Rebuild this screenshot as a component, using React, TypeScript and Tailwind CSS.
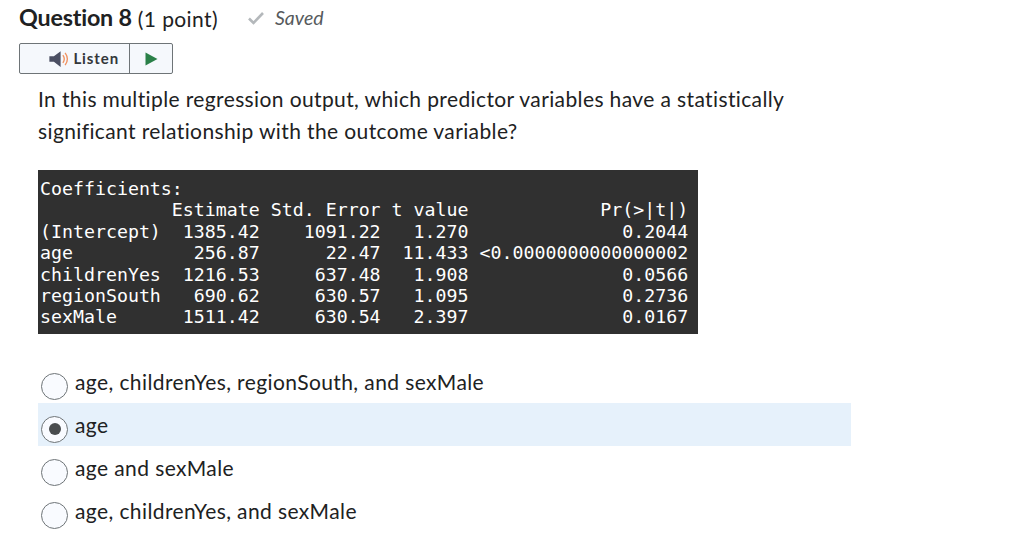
import React from "react";

const rows = [
  ["", "Estimate", "Std. Error", "t value", "Pr(>|t|)"],
  ["(Intercept)", "1385.42", "1091.22", "1.270", "0.2044"],
  ["age", "256.87", "22.47", "11.433", "<0.0000000000000002"],
  ["childrenYes", "1216.53", "637.48", "1.908", "0.0566"],
  ["regionSouth", "690.62", "630.57", "1.095", "0.2736"],
  ["sexMale", "1511.42", "630.54", "2.397", "0.0167"],
];

const line = (r: string[]) =>
  r[0].padEnd(11) + r[1].padStart(9) + r[2].padStart(11) + r[3].padStart(8) + r[4].padStart(20);

const options = [
  "age, childrenYes, regionSouth, and sexMale",
  "age",
  "age and sexMale",
  "age, childrenYes, and sexMale",
];

function Radio({ checked }: { checked: boolean }) {
  return (
    <span className="mt-[9px] flex h-[27px] w-[27px] shrink-0 items-center justify-center rounded-full border border-[#6e7477] bg-[#f9fbff]">
      {checked && <span className="h-[12px] w-[12px] rounded-full bg-[#494c4e]" />}
    </span>
  );
}

export default function App() {
  return (
    <div className="h-[556px] w-[1017px] overflow-hidden bg-white font-['Lato','Noto_Sans',sans-serif] text-[#202122]">
      <div className="flex h-[36px] items-center pl-[19px]">
        <h2 className="text-[23.3px] font-bold leading-none tracking-[-0.2px]">Question 8</h2>
        <span className="ml-[6px] text-[21px] leading-none tracking-[0.4px] text-[#202122]">(1 point)</span>
        <svg width="18" height="16" viewBox="0 0 18 16" className="ml-[29px]">
          <path d="M2 8.5 L6.5 13 L16 3" fill="none" stroke="#b4b8bb" strokeWidth="2.6" />
        </svg>
        <span className="ml-[10px] text-[19.5px] italic leading-none text-[#565a5c]">Saved</span>
      </div>

      <div className="ml-[19px] mt-[7px] flex h-[31px] w-[154px] rounded-[2px] border border-[#6e7477] bg-[#f5f8fc]">
        <div className="flex w-[110px] items-center justify-end gap-[2px] border-r border-[#6e7477] pr-[10px]">
          <svg width="23" height="18" viewBox="0 0 20 16">
            <path d="M1 5.5 H5 L11 1 V15 L5 10.5 H1 Z" fill="#4b4f63" />
            <path d="M13 4.5 Q15.5 8 13 11.5" fill="none" stroke="#f0915f" strokeWidth="1.2" />
            <path d="M15 2.5 Q19 8 15 13.5" fill="none" stroke="#f0915f" strokeWidth="1.2" />
          </svg>
          <span className="text-[15px] font-bold leading-none tracking-[0.9px] text-[#33373a]">Listen</span>
        </div>
        <div className="flex flex-1 items-center justify-center">
          <svg width="13" height="14" viewBox="0 0 13 14">
            <path d="M0.5 0.5 L12.5 7 L0.5 13.5 Z" fill="#2a8048" />
          </svg>
        </div>
      </div>

      <p className="ml-[38px] mt-[9px] w-[800px] text-[21px] leading-[32px] tracking-[0.38px] text-[#202122]">
        In this multiple regression output, which predictor variables have a statistically significant relationship with the outcome variable?
      </p>

      <pre className="ml-[38px] mt-[23px] h-[164px] w-[660px] bg-[#303030] pl-[2px] pt-[8px] font-['DejaVu_Sans_Mono',monospace] text-[18.25px] leading-[21.4px] text-white">
        {["Coefficients:", ...rows.map(line)].join("\n")}
      </pre>

      <div className="mt-[26px] ml-[38px] w-[813px]">
        {options.map((o, i) => (
          <div
            key={o}
            className={`flex h-[43px] items-center gap-[7px] pl-[3px] ${i === 1 ? "bg-[#e6f1fb]" : ""}`}
          >
            <Radio checked={i === 1} />
            <span className="-mt-[1px] text-[21px] leading-none tracking-[0.4px] text-[#202122]">{o}</span>
          </div>
        ))}
      </div>
    </div>
  );
}
